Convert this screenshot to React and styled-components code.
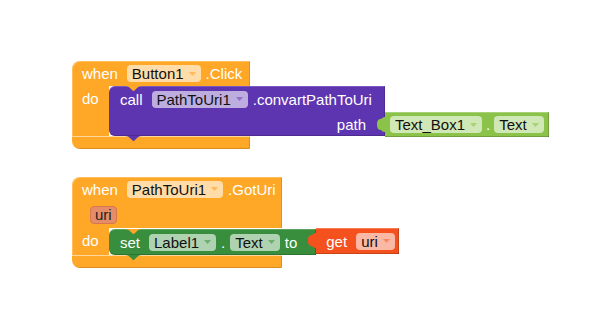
import React from 'react';
import styled, { createGlobalStyle } from 'styled-components';

const C = {
  orange: '#FFA726',
  purple: '#5E35B1',
  green: '#388E3C',
  lime: '#8BC34A',
  red: '#F4511E',
};

const GlobalStyle = createGlobalStyle`
  html, body { margin: 0; padding: 0; background: #fff; }
  body { font-family: "Liberation Sans", Arial, sans-serif; }
`;

const Canvas = styled.div`
  position: relative;
  width: 615px;
  height: 322px;
  overflow: hidden;
  background: #fff;
`;

const EventBlock = styled.div`
  position: absolute;
  left: ${p => p.$x}px;
  top: ${p => p.$y}px;
  display: flex;
  flex-direction: column;
  align-items: flex-start;
`;

const Header = styled.div`
  box-sizing: border-box;
  width: ${p => p.$w}px;
  background: ${C.orange};
  border-radius: 8px 1px 0 0;
  padding-left: 10px;
  display: flex;
  flex-direction: column;
  box-shadow: inset -1px 0 0 rgba(0, 0, 0, 0.12), inset 1px 1px 0 rgba(255, 255, 255, 0.25);
`;

const Row = styled.div`
  display: flex;
  align-items: center;
  gap: 5px;
  height: ${p => p.$h}px;
  justify-content: ${p => (p.$end ? 'flex-end' : 'flex-start')};
  padding-left: ${p => p.$pl || 0}px;
  padding-right: ${p => p.$pr || 0}px;
`;

const Label = styled.span`
  color: #fff;
  font-size: 15px;
  line-height: 17px;
  white-space: nowrap;
  margin-right: ${p => (p.$kw ? 4 : 0)}px;
`;

const Body = styled.div`
  display: flex;
  align-items: stretch;
`;

const DoArm = styled.div`
  box-sizing: border-box;
  width: 37px;
  background: ${C.orange};
  padding-left: 10px;
  box-shadow: inset 1px 0 0 rgba(255, 255, 255, 0.25);
`;

const DoLabel = styled.div`
  color: #fff;
  font-size: 15px;
  height: ${p => p.$h}px;
  line-height: ${p => p.$h}px;
`;

const Slot = styled.div`
  display: flex;
  align-items: flex-end;
`;

const Footer = styled.div`
  box-sizing: border-box;
  width: ${p => p.$w}px;
  height: 13px;
  background: ${C.orange};
  border-radius: 0 0 1px 8px;
  border-top: 1px solid rgba(255, 255, 255, 0.55);
  box-shadow: inset -1px -1px 0 rgba(0, 0, 0, 0.14);
`;

const StatementBlock = styled.div`
  position: relative;
  box-sizing: border-box;
  width: ${p => (p.$w ? `${p.$w}px` : 'auto')};
  background: ${p => p.$bg};
  border-radius: 6px 0 0 6px;
  display: flex;
  flex-direction: ${p => (p.$col ? 'column' : 'row')};
  align-items: ${p => (p.$col ? 'stretch' : 'center')};
  gap: ${p => (p.$col ? 0 : 5)}px;
  height: ${p => (p.$h ? `${p.$h}px` : 'auto')};
  padding-left: ${p => p.$pl || 0}px;
  padding-right: ${p => p.$pr || 0}px;
  box-shadow: inset 0 -1px 0 rgba(0, 0, 0, 0.18), inset -1px 0 0 rgba(0, 0, 0, 0.18),
    inset 0 1px 0 rgba(255, 255, 255, 0.18);
`;

const ValueBlock = styled.div`
  position: relative;
  box-sizing: border-box;
  background: ${p => p.$bg};
  height: ${p => p.$h}px;
  display: flex;
  align-items: center;
  gap: ${p => p.$gap || 5}px;
  padding-left: ${p => p.$pl}px;
  padding-right: ${p => p.$pr}px;
  margin-bottom: ${p => p.$mb || 0}px;
  box-shadow: inset 0 -1px 0 rgba(0, 0, 0, 0.18), inset -1px 0 0 rgba(0, 0, 0, 0.18),
    inset 0 1px 0 rgba(255, 255, 255, 0.25);
`;

const NotchSvg = styled.svg`
  position: absolute;
  left: 16px;
  ${p => (p.$bottom ? 'bottom: -5px;' : 'top: 0;')}
  width: 17px;
  height: 5px;
  z-index: 1;
`;

const TabSvg = styled.svg`
  position: absolute;
  left: -8px;
  top: 5px;
  width: 9px;
  height: 15px;
`;

const DropBox = styled.span`
  display: inline-flex;
  align-items: center;
  gap: 5px;
  height: 17px;
  padding: 0 5px;
  border-radius: 4px;
  background: rgba(255, 255, 255, 0.6);
  color: #111;
  font-size: 15px;
  white-space: nowrap;
`;

const Chip = styled.span`
  display: inline-flex;
  align-items: center;
  height: 16px;
  padding: 0 4px;
  margin-left: 8px;
  border-radius: 4px;
  background: #E58D68;
  border: 1px solid #D7774F;
  color: #222;
  font-size: 15px;
`;

const Notch = ({ color, bottom }) => (
  <NotchSvg $bottom={bottom} viewBox="0 0 17 5">
    {bottom ? (
      <path d="M0,0 C3,0 4,1 6,3 C7,4.3 8,5 8.5,5 C9,5 10,4.3 11,3 C13,1 14,0 17,0 Z" fill={color} />
    ) : (
      <path d="M0,0 L17,0 C14,0 13,1 11,3 C10,4.3 9,5 8.5,5 C8,5 7,4.3 6,3 C4,1 3,0 0,0 Z" fill={color} />
    )}
  </NotchSvg>
);

const Tab = ({ color }) => (
  <TabSvg viewBox="0 0 9 15">
    <path
      d="M9,0 L8,0 C6,0 5,1 4,2 C2,2 0,3 0,7.5 C0,12 2,13 4,13 C5,14 6,15 8,15 L9,15 Z"
      fill={color}
    />
  </TabSvg>
);

const Dropdown = ({ children, arrow }) => (
  <DropBox>
    {children}
    <svg width="7" height="4" viewBox="0 0 7 4">
      <path d="M0,0 L7,0 L3.5,4 Z" fill={arrow} />
    </svg>
  </DropBox>
);

export default function App() {
  return (
    <>
      <GlobalStyle />
      <Canvas>
        <EventBlock $x={72} $y={61}>
          <Header $w={178}>
            <Row $h={25}>
              <Label $kw>when</Label>
              <Dropdown arrow="#FFB95A">Button1</Dropdown>
              <Label>.Click</Label>
            </Row>
          </Header>
          <Body>
            <DoArm>
              <DoLabel $h={26}>do</DoLabel>
            </DoArm>
            <Slot>
              <StatementBlock $bg={C.purple} $col $w={276}>
                <Notch color={C.orange} />
                <Row $h={26} $pl={11}>
                  <Label $kw>call</Label>
                  <Dropdown arrow="#8E72C8">PathToUri1</Dropdown>
                  <Label>.convartPathToUri</Label>
                </Row>
                <Row $h={24} $end $pr={19}>
                  <Label>path</Label>
                </Row>
                <Notch color={C.purple} bottom />
              </StatementBlock>
              <ValueBlock $bg={C.lime} $h={25} $pl={5} $pr={5} $gap={4} $mb={-1}>
                <Tab color={C.lime} />
                <Dropdown arrow="#A9D36F">Text_Box1</Dropdown>
                <Label>.</Label>
                <Dropdown arrow="#A9D36F">Text</Dropdown>
              </ValueBlock>
            </Slot>
          </Body>
          <Footer $w={178} />
        </EventBlock>

        <EventBlock $x={72} $y={177}>
          <Header $w={210}>
            <Row $h={24}>
              <Label $kw>when</Label>
              <Dropdown arrow="#FFB95A">PathToUri1</Dropdown>
              <Label>.GotUri</Label>
            </Row>
            <Row $h={27}>
              <Chip>uri</Chip>
            </Row>
          </Header>
          <Body>
            <DoArm>
              <DoLabel $h={26}>do</DoLabel>
            </DoArm>
            <Slot>
              <StatementBlock $bg={C.green} $h={26} $pl={11} $pr={19}>
                <Notch color={C.orange} />
                <Label $kw>set</Label>
                <Dropdown arrow="#6FAE72">Label1</Dropdown>
                <Label>.</Label>
                <Dropdown arrow="#6FAE72">Text</Dropdown>
                <Label>to</Label>
                <Notch color={C.green} bottom />
              </StatementBlock>
              <ValueBlock $bg={C.red} $h={26} $pl={10} $pr={4} $mb={1}>
                <Tab color={C.red} />
                <Label $kw>get</Label>
                <Dropdown arrow="#F78862">uri</Dropdown>
              </ValueBlock>
            </Slot>
          </Body>
          <Footer $w={210} />
        </EventBlock>
      </Canvas>
    </>
  );
}
